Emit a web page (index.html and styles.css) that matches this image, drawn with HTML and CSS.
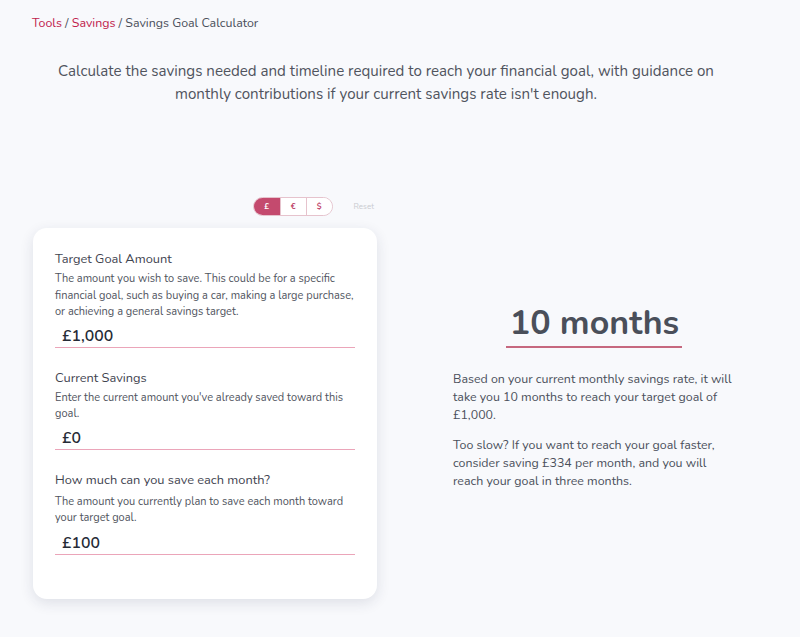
FILE: index.html
```html
<!DOCTYPE html>
<html lang="en">
<head>
<meta charset="utf-8">
<title>Savings Goal Calculator</title>
<link rel="stylesheet" href="styles.css">
</head>
<body>
<div class="page">
  <nav class="crumbs"><a href="#">Tools</a> / <a href="#">Savings</a> / <span>Savings Goal Calculator</span></nav>
  <p class="intro">Calculate the savings needed and timeline required to reach your financial goal, with guidance on monthly contributions if your current savings rate isn't enough.</p>

  <div class="calc">
    <div class="left">
      <div class="controls">
        <div class="toggle">
          <button class="seg active">£</button>
          <button class="seg">€</button>
          <button class="seg">$</button>
        </div>
        <button class="reset">Reset</button>
      </div>
      <div class="card">
        <div class="field">
          <div class="label">Target Goal Amount</div>
          <div class="desc">The amount you wish to save. This could be for a specific financial goal, such as buying a car, making a large purchase, or achieving a general savings target.</div>
          <div class="input">£1,000</div>
        </div>
        <div class="field">
          <div class="label">Current Savings</div>
          <div class="desc">Enter the current amount you've already saved toward this goal.</div>
          <div class="input">£0</div>
        </div>
        <div class="field">
          <div class="label">How much can you save each month?</div>
          <div class="desc">The amount you currently plan to save each month toward your target goal.</div>
          <div class="input">£100</div>
        </div>
      </div>
    </div>
    <div class="right">
      <div class="result"><span class="result-text">10 months</span></div>
      <p class="para">Based on your current monthly savings rate, it will take you 10 months to reach your target goal of £1,000.</p>
      <p class="para">Too slow? If you want to reach your goal faster, consider saving £334 per month, and you will reach your goal in three months.</p>
    </div>
  </div>
</div>
</body>
</html>
```

FILE: styles.css
```css
* { box-sizing: border-box; }
html, body { margin: 0; padding: 0; }
body {
  background: #f8f9fc;
  font-family: "Nunito", Lato, "Noto Sans", sans-serif;
  color: #4b505b;
  width: 800px;
  height: 637px;
  overflow: hidden;
}
.page { padding: 14px 32px 0 32px; }
.crumbs { font-size: 12.4px; line-height: 18px; color: #4b505b; }
.crumbs a { color: #c0224c; text-decoration: none; }
.intro {
  margin: 28px auto 0;
  width: 670px;
  text-align: center;
  font-size: 15.1px;
  line-height: 23px;
  color: #50545e;
  position: relative;
  left: -14px;
}
.calc {
  display: flex;
  align-items: center;
  margin-top: 91px;
}
.left { width: 344px; margin-left: 1px; }
.controls {
  display: flex;
  justify-content: flex-end;
  align-items: center;
  gap: 21px;
  padding-right: 3px;
  margin-bottom: 12px;
}
.toggle {
  display: flex;
  border: 1px solid #e6c3cd;
  border-radius: 10px;
  overflow: hidden;
  height: 19px;
}
.seg {
  width: 26px;
  border: none;
  border-left: 1px solid #e6c3cd;
  background: #fff;
  color: #c0446a;
  font-family: inherit;
  font-size: 8px;
  font-weight: 700;
  padding: 0;
}
.seg:first-child { border-left: none; }
.seg.active { background: #c44a6e; color: #fff; }
.reset {
  border: none; background: none; padding: 0;
  font-family: inherit; font-size: 8px; color: #c9cbd0;
}
.card {
  background: #fff;
  border-radius: 14px;
  box-shadow: 0 4px 14px rgba(30, 40, 70, 0.12);
  padding: 22px 22px 44px 22px;
  height: 371px;
}
.field + .field { margin-top: 21px; }
.field:last-child .desc { margin-top: 5px; }
.field:last-child .input { margin-top: 6px; }
.label { font-size: 12.8px; line-height: 18px; color: #3f4450; }
.desc {
  margin-top: 3px;
  font-size: 11px;
  line-height: 16.5px;
  color: #50545e;
}
.input {
  margin-top: 5px;
  padding: 0 0 0 7px;
  font-size: 15.8px;
  line-height: 21px;
  font-weight: 600;
  color: #262b36;
  border-bottom: 1px solid #eba5b9;
}
.right { margin-left: 76px; width: 282px; padding-top: 6px; }
.result { text-align: center; margin-bottom: 22px; }
.result-text {
  display: inline-block;
  font-size: 34px;
  font-weight: 700;
  color: #4a4f5a;
  line-height: 44px;
  padding: 0 3px 1px 4px;
  border-bottom: 2px solid #c6687f;
}
.para {
  margin: 0 0 11px;
  font-size: 12.4px;
  line-height: 18.2px;
  color: #4b505b;
}
```
